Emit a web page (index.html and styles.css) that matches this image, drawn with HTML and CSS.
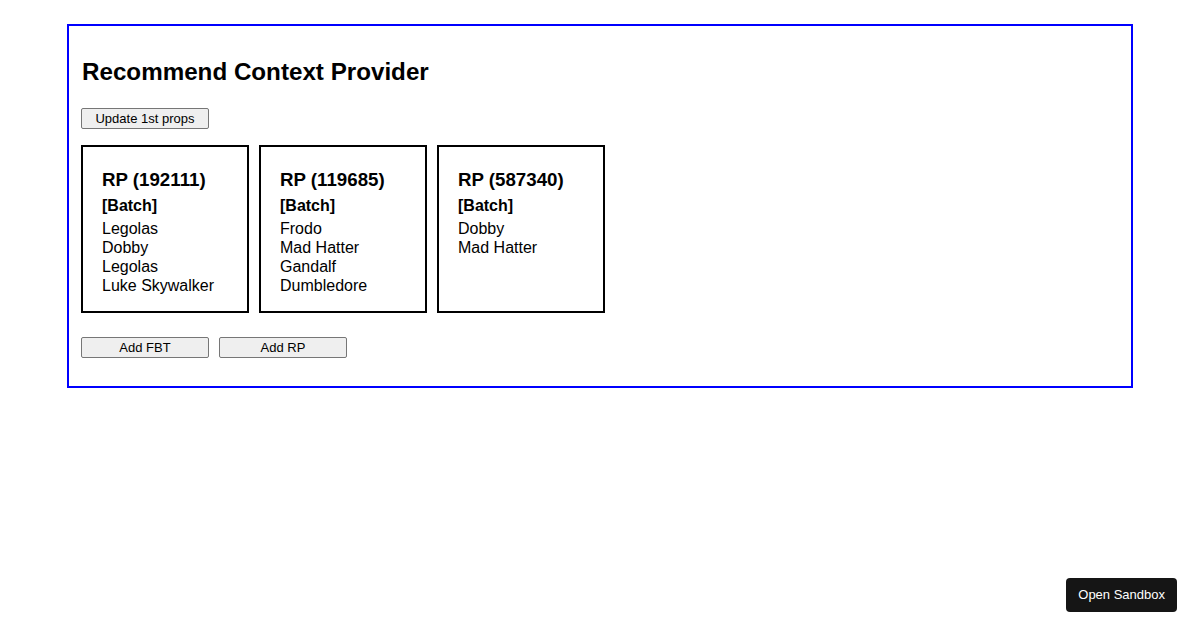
FILE: index.html
```html
<!DOCTYPE html>
<html>
<head>
<meta charset="utf-8">
<link rel="stylesheet" href="styles.css">
</head>
<body>
<div class="provider">
  <h2 class="title">Recommend Context Provider</h2>
  <button class="btn">Update 1st props</button>
  <div class="cards">
    <div class="card">
      <h3 class="card-title">RP (192111)</h3>
      <div class="batch">[Batch]</div>
      <div class="name">Legolas</div>
      <div class="name">Dobby</div>
      <div class="name">Legolas</div>
      <div class="name">Luke Skywalker</div>
    </div>
    <div class="card">
      <h3 class="card-title">RP (119685)</h3>
      <div class="batch">[Batch]</div>
      <div class="name">Frodo</div>
      <div class="name">Mad Hatter</div>
      <div class="name">Gandalf</div>
      <div class="name">Dumbledore</div>
    </div>
    <div class="card">
      <h3 class="card-title">RP (587340)</h3>
      <div class="batch">[Batch]</div>
      <div class="name">Dobby</div>
      <div class="name">Mad Hatter</div>
    </div>
  </div>
  <div class="actions">
    <button class="btn">Add FBT</button>
    <button class="btn">Add RP</button>
  </div>
</div>
<button class="sandbox">Open Sandbox</button>
</body>
</html>
```
FILE: styles.css
```css
html, body {
  margin: 0;
  padding: 0;
  background: #ffffff;
}
body {
  font-family: "Liberation Sans", Arial, sans-serif;
  color: #000;
}
.provider {
  margin: 24px 67px;
  border: 2px solid #0000ff;
  padding: 12px 12px 28px;
}
.title {
  margin: 20px 0 22px;
  padding-left: 1px;
  font-size: 24.2px;
  line-height: 28px;
  font-weight: bold;
}
.btn {
  display: block;
  width: 128px;
  height: 21px;
  padding: 0 6px;
  font-family: "Liberation Sans", Arial, sans-serif;
  font-size: 13px;
  color: #000;
  background: #efefef;
  border: 1px solid #767676;
  border-radius: 2px;
  box-sizing: border-box;
}
.cards {
  display: flex;
  gap: 10px;
  margin-top: 16px;
}
.card {
  width: 168px;
  height: 168px;
  box-sizing: border-box;
  border: 2px solid #000;
  padding: 22px 19px 0;
}
.card-title {
  margin: 0 0 5px;
  font-size: 18.72px;
  line-height: 22px;
  font-weight: bold;
}
.batch {
  font-weight: bold;
  font-size: 16px;
  line-height: 19px;
  margin-bottom: 4px;
}
.name {
  font-size: 16px;
  line-height: 19px;
}
.actions {
  display: flex;
  gap: 10px;
  margin-top: 24px;
}
.sandbox {
  position: fixed;
  right: 23px;
  bottom: 18px;
  height: 34px;
  padding: 0 12px 1px;
  background: #151515;
  color: #fff;
  border: none;
  border-radius: 4px;
  font-family: "Liberation Sans", Arial, sans-serif;
  font-size: 13px;
}
```
